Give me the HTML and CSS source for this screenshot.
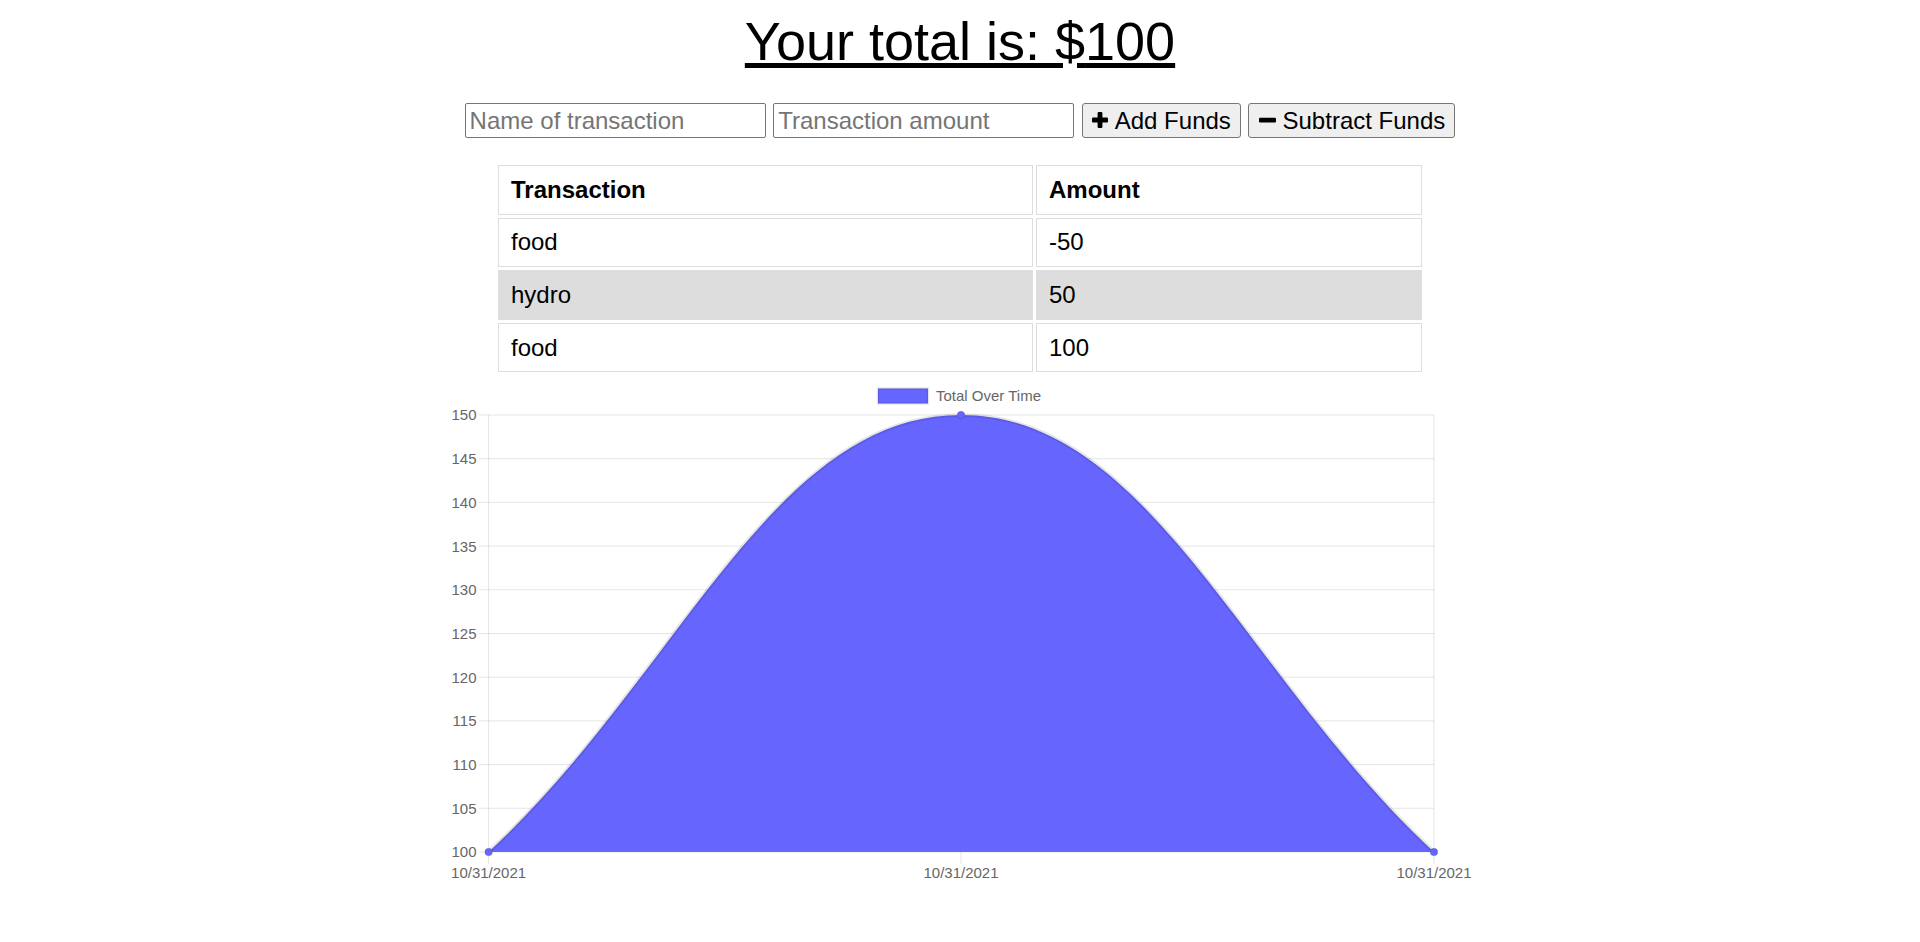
FILE: index.html
```html
<!DOCTYPE html>
<html lang="en">
<head>
  <meta charset="UTF-8">
  <title>Budget Tracker</title>
  <link rel="stylesheet" href="styles.css">
</head>
<body>

  <h1 class="total">Your total is: $<span id="total">100</span></h1>

  <div class="form">
    <input type="text" id="t-name" placeholder="Name of transaction">
    <input type="number" id="t-amount" placeholder="Transaction amount">
    <button class="btn add" id="add-btn">
      <svg class="icon" width="16" height="16" viewBox="0 0 16 16"><rect x="5.6" y="0" width="4.8" height="16" rx="1"/><rect x="0" y="5.6" width="16" height="4.8" rx="1"/></svg>
      Add Funds
    </button>
    <button class="btn sub" id="sub-btn">
      <svg class="icon" width="17" height="16" viewBox="0 0 17 16"><rect x="0" y="5.8" width="17" height="4.6" rx="1"/></svg>
      Subtract Funds
    </button>
  </div>

  <table class="transactions">
    <thead>
      <tr>
        <th class="col-name">Transaction</th>
        <th>Amount</th>
      </tr>
    </thead>
    <tbody id="tbody">
      <tr><td>food</td><td>-50</td></tr>
      <tr><td>hydro</td><td>50</td></tr>
      <tr><td>food</td><td>100</td></tr>
    </tbody>
  </table>

  <div class="chart">
    <svg width="1040" height="520" viewBox="0 0 1040 520">
      <!-- legend -->
      <rect x="438" y="12.5" width="50" height="15" fill="#6666ff" stroke="rgba(0,0,0,0.1)" stroke-width="2.5"/>
      <text class="legend" x="496" y="24.5">Total Over Time</text>

      <!-- grid -->
      <g stroke="rgba(0,0,0,0.1)" stroke-width="1">
        <line x1="39" y1="39" x2="994" y2="39"/>
        <line x1="39" y1="82.7" x2="994" y2="82.7"/>
        <line x1="39" y1="126.4" x2="994" y2="126.4"/>
        <line x1="39" y1="170.1" x2="994" y2="170.1"/>
        <line x1="39" y1="213.8" x2="994" y2="213.8"/>
        <line x1="39" y1="257.5" x2="994" y2="257.5"/>
        <line x1="39" y1="301.2" x2="994" y2="301.2"/>
        <line x1="39" y1="344.9" x2="994" y2="344.9"/>
        <line x1="39" y1="388.6" x2="994" y2="388.6"/>
        <line x1="39" y1="432.3" x2="994" y2="432.3"/>
        <line x1="39" y1="476" x2="994" y2="476"/>
        <line x1="48.6" y1="39" x2="48.6" y2="488"/>
        <line x1="521" y1="39" x2="521" y2="488"/>
        <line x1="994" y1="39" x2="994" y2="488"/>
      </g>

      <!-- y axis -->
      <g class="tick" text-anchor="end">
        <text x="36.5" y="44.4">150</text>
        <text x="36.5" y="88.1">145</text>
        <text x="36.5" y="131.8">140</text>
        <text x="36.5" y="175.5">135</text>
        <text x="36.5" y="219.2">130</text>
        <text x="36.5" y="262.9">125</text>
        <text x="36.5" y="306.6">120</text>
        <text x="36.5" y="350.3">115</text>
        <text x="36.5" y="394">110</text>
        <text x="36.5" y="437.7">105</text>
        <text x="36.5" y="481.4">100</text>
      </g>

      <!-- x axis -->
      <g class="tick" text-anchor="middle">
        <text x="48.6" y="502.3">10/31/2021</text>
        <text x="521" y="502.3">10/31/2021</text>
        <text x="994" y="502.3">10/31/2021</text>
      </g>

      <!-- dataset -->
      <path d="M48.6,476 C237.56,301.2 331.9,39 521,39 C710.1,39 805.04,301.2 994,476 Z" fill="#6666ff"/>
      <path d="M48.6,476 C237.56,301.2 331.9,39 521,39 C710.1,39 805.04,301.2 994,476" fill="none" stroke="rgba(0,0,0,0.1)" stroke-width="3.75"/>
      <g fill="#6666ff" stroke="rgba(0,0,0,0.1)" stroke-width="1.25">
        <circle cx="48.6" cy="476" r="3.75"/>
        <circle cx="521" cy="39" r="3.75"/>
        <circle cx="994" cy="476" r="3.75"/>
      </g>
    </svg>
  </div>

</body>
</html>
```

FILE: styles.css
```css
body {
  margin: 0;
  font-family: "Liberation Sans", Arial, sans-serif;
  color: #000;
  background: #fff;
}

.total {
  margin: 10px 0 0;
  font-size: 54px;
  font-weight: normal;
  text-align: center;
  text-decoration: underline;
}

.form {
  display: flex;
  justify-content: center;
  gap: 7.6px;
  margin-top: 31px;
}

.form input {
  box-sizing: border-box;
  width: 301px;
  height: 35px;
  padding: 1px 4px;
  border: 1px solid #767676;
  border-radius: 2px;
  font-family: "Liberation Sans", Arial, sans-serif;
  font-size: 24px;
  color: #000;
}

.form input::placeholder {
  color: #757575;
}

.btn {
  box-sizing: border-box;
  height: 35px;
  padding: 0;
  display: inline-flex;
  align-items: center;
  justify-content: center;
  gap: 7px;
  background-color: #efefef;
  border: 1px solid #767676;
  border-radius: 3px;
  font-family: "Liberation Sans", Arial, sans-serif;
  font-size: 24px;
  color: #000;
  cursor: pointer;
}

.btn.add {
  width: 159px;
}

.btn.sub {
  width: 207px;
}

.icon {
  fill: #000;
  flex: none;
  margin-top: -2px;
}

.transactions {
  width: 930px;
  margin: 24px auto 0;
  border-spacing: 3px;
  table-layout: fixed;
  font-size: 24px;
}

.transactions th,
.transactions td {
  box-sizing: border-box;
  border: 1px solid #ddd;
  padding: 9.8px 12px;
  text-align: left;
}

.transactions th.col-name {
  width: 535px;
}

.transactions tbody tr:nth-child(even) td {
  background-color: #ddd;
}

.chart {
  width: 1040px;
  margin: 1px auto 0;
}

.chart svg {
  display: block;
}

.tick,
.legend {
  font-family: "Liberation Sans", Arial, sans-serif;
  font-size: 15px;
  fill: #666;
}
```
